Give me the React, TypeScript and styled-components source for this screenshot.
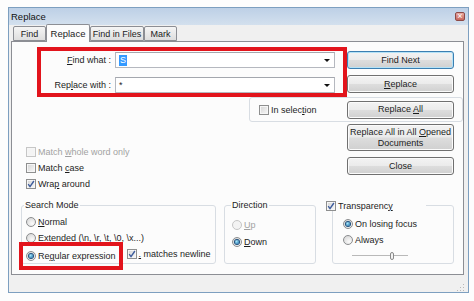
import React from "react";
import styled, { createGlobalStyle } from "styled-components";

const GlobalStyle = createGlobalStyle`
	html, body {
		margin: 0;
		padding: 0;
		background: #fdfdfd;
	}
	body {
		font-family: "Liberation Sans", Arial, sans-serif;
		font-size: 9px;
		color: #1c1c1c;
	}
`;

function Check({ checked, disabled }: { checked?: boolean; disabled?: boolean }) {
	return (
		<CheckBox $disabled={disabled}>
			{checked && (
				<svg width="8" height="8" viewBox="0 0 8 8">
					<path d="M1.2 4.2 L3 6.6 L6.9 1" stroke="#3d5c9c" strokeWidth="1.4" fill="none" />
				</svg>
			)}
		</CheckBox>
	);
}

export default function App() {
	return (
		<Page>
			<GlobalStyle />
			<Window>
				<TitleBar>
					<Title>Replace</Title>
					<CloseBox>×</CloseBox>
				</TitleBar>
				<Body>
					<TabStrip>
						<Tab $w={33}>Find</Tab>
						<Tab $w={44} $active>
							Replace
						</Tab>
						<Tab $w={54}>Find in Files</Tab>
						<Tab $w={33}>Mark</Tab>
					</TabStrip>

					<Panel>
						<TopSection>
							<RedFrame>
								<FieldRow>
									<FieldLabel>
										<Key>F</Key>ind what :
									</FieldLabel>
									<Combo>
										<Selected>S</Selected>
										<Arrow />
									</Combo>
								</FieldRow>
								<FieldRow>
									<FieldLabel>
										Rep<Key>l</Key>ace with :
									</FieldLabel>
									<Combo>
										<span>*</span>
										<Arrow />
									</Combo>
								</FieldRow>
							</RedFrame>
							<ButtonStack $top={4}>
								<Button $default>Find Next</Button>
								<Button>
									<Key>R</Key>eplace
								</Button>
							</ButtonStack>
						</TopSection>

						<SelectionGroup>
							<CheckRow>
								<Check />
								<span>
									In selec<Key>t</Key>ion
								</span>
							</CheckRow>
							<Button $push>
								Replace <Key>A</Key>ll
							</Button>
						</SelectionGroup>

						<MiddleSection>
							<CheckColumn>
								<CheckRow $disabled>
									<Check disabled />
									<span>
										Match <Key>w</Key>hole word only
									</span>
								</CheckRow>
								<CheckRow>
									<Check />
									<span>
										Match <Key>c</Key>ase
									</span>
								</CheckRow>
								<CheckRow>
									<Check checked />
									<span>
										Wra<Key>p</Key> around
									</span>
								</CheckRow>
							</CheckColumn>
							<ButtonStack $top={2} $push>
								<Button $tall>
									Replace All in All <Key>O</Key>pened
									<br />
									Documents
								</Button>
								<Button>Close</Button>
							</ButtonStack>
						</MiddleSection>

						<BottomSection>
							<Group $left={9} $w={195} $pad={4} $top={3}>
								<Legend $shift={-2}>Search Mode</Legend>
								<RadioRow>
									<Radio />
									<span>
										<Key>N</Key>ormal
									</span>
								</RadioRow>
								<RadioRow>
									<Radio />
									<span>
										E<Key>x</Key>tended (\n, \r, \t, \0, \x...)
									</span>
								</RadioRow>
								<RadioRow>
									<RedMark>
										<RadioRow>
											<Radio $on />
											<span>
												Re<Key>g</Key>ular expression
											</span>
										</RadioRow>
									</RedMark>
									<NewlineCheck>
										<Check checked />
										<span>
											<Key>.</Key> matches newline
										</span>
									</NewlineCheck>
								</RadioRow>
							</Group>

							<Group $left={8} $w={92} $pad={7} $top={5}>
								<Legend $shift={-1}>Direction</Legend>
								<RadioRow $h={17} $disabled>
									<Radio $disabled />
									<span>
										<Key>U</Key>p
									</span>
								</RadioRow>
								<RadioRow $h={17}>
									<Radio $on />
									<span>
										<Key>D</Key>own
									</span>
								</RadioRow>
							</Group>

							<Group $left={16} $w={122} $pad={10} $top={4}>
								<CheckLegend>
									<Check checked />
									<span>
										Transparenc<Key>y</Key>
									</span>
								</CheckLegend>
								<RadioRow $h={17}>
									<Radio $on />
									<span>On losing focus</span>
								</RadioRow>
								<RadioRow $h={16}>
									<Radio />
									<span>Always</span>
								</RadioRow>
								<Slider>
									<SliderThumb />
								</Slider>
							</Group>
						</BottomSection>
					</Panel>

					<Footer>
						<Grip />
					</Footer>
				</Body>
			</Window>
		</Page>
	);
}

const Page = styled.div`
	padding: 7px 0 0 8px;
	height: 301px;
	box-sizing: border-box;
`;

const Window = styled.div`
	width: 461px;
	height: 286px;
	box-sizing: border-box;
	border: 1px solid #7d9fc0;
	background: #f0f0f0;
	display: flex;
	flex-direction: column;
`;

const TitleBar = styled.div`
	height: 17px;
	flex-shrink: 0;
	display: flex;
	align-items: center;
	padding: 0 3px 0 2px;
	background: linear-gradient(#bdd0e6, #d3e0ee);
`;

const Title = styled.span`
	font-size: 9.5px;
	color: #111;
`;

const CloseBox = styled.span`
	margin-left: auto;
	width: 10px;
	height: 9px;
	box-sizing: border-box;
	border: 1px solid #8e4a46;
	border-radius: 2px;
	background: linear-gradient(#e9aaa2, #c8665c);
	color: #fff;
	font-size: 9px;
	line-height: 6px;
	text-align: center;
`;

const Body = styled.div`
	flex: 1;
	display: flex;
	flex-direction: column;
	padding: 0 4px 0 2px;
`;

const TabStrip = styled.div`
	height: 16px;
	flex-shrink: 0;
	display: flex;
	align-items: flex-end;
	padding-left: 2px;
`;

const Tab = styled.div<{ $w: number; $active?: boolean }>`
	width: ${(p) => p.$w}px;
	height: ${(p) => (p.$active ? 18 : 15)}px;
	margin-bottom: ${(p) => (p.$active ? -1 : 0)}px;
	box-sizing: border-box;
	border: 1px solid #8c8e94;
	border-bottom: ${(p) => (p.$active ? "none" : "1px solid #8c8e94")};
	border-radius: 2px 2px 0 0;
	background: ${(p) => (p.$active ? "#fcfcfc" : "linear-gradient(#f5f5f5, #dedede)")};
	display: flex;
	align-items: center;
	justify-content: center;
	position: relative;
	z-index: ${(p) => (p.$active ? 1 : 0)};
	font-size: ${(p) => (p.$active ? 9.5 : 9)}px;
`;

const Panel = styled.div`
	height: 234px;
	flex-shrink: 0;
	box-sizing: border-box;
	border: 1px solid #8c8e94;
	background: #fcfcfc;
	padding-top: 5px;
	display: flex;
	flex-direction: column;
`;

const TopSection = styled.div`
	display: flex;
	align-items: flex-start;
`;

const RedFrame = styled.div`
	margin-left: 25px;
	width: 310px;
	height: 50px;
	box-sizing: border-box;
	border: 4px solid #e2141c;
	padding-top: 1px;
	display: flex;
	flex-direction: column;
	gap: 9px;
`;

const FieldRow = styled.div`
	height: 16px;
	display: flex;
	align-items: center;
`;

const FieldLabel = styled.span`
	width: 70px;
	margin-right: 4px;
	text-align: right;
	white-space: nowrap;
`;

const Combo = styled.div`
	width: 220px;
	height: 16px;
	box-sizing: border-box;
	border: 1px solid #b5b8bf;
	border-top-color: #a4a7ae;
	background: #fff;
	display: flex;
	align-items: center;
	padding: 0 4px 0 3px;
`;

const Selected = styled.span`
	background: #3399ff;
	color: #fff;
	padding: 0 1px;
	line-height: 11px;
`;

const Arrow = styled.span`
	margin-left: auto;
	width: 0;
	height: 0;
	border-left: 3px solid transparent;
	border-right: 3px solid transparent;
	border-top: 3px solid #111;
`;

const ButtonStack = styled.div<{ $top: number; $push?: boolean }>`
	display: flex;
	flex-direction: column;
	gap: 6px;
	margin-top: ${(p) => p.$top}px;
	margin-left: ${(p) => (p.$push ? "auto" : "0")};
	margin-right: ${(p) => (p.$push ? 9 : 0)}px;
`;

const Button = styled.button<{ $default?: boolean; $tall?: boolean; $push?: boolean }>`
	width: 107px;
	height: ${(p) => (p.$tall ? 27 : 18)}px;
	box-sizing: border-box;
	margin: 0 ${(p) => (p.$push ? 8 : 0)}px 0 ${(p) => (p.$push ? "auto" : "0")};
	padding: 0;
	font: inherit;
	font-size: 9px;
	line-height: 11px;
	color: #1c1c1c;
	border: 1px solid ${(p) => (p.$default ? "#3c7fb1" : "#707070")};
	border-radius: 3px;
	background: linear-gradient(#f3f3f3, #ebebeb 48%, #dddddd 52%, #d0d0d0);
	box-shadow: inset 0 0 0 1px ${(p) => (p.$default ? "#b4e2f7" : "#fbfbfb")};
`;

const SelectionGroup = styled.div`
	margin-left: 237px;
	width: 214px;
	height: 25px;
	box-sizing: border-box;
	border: 1px solid #d8dde3;
	border-radius: 3px;
	padding-left: 9px;
	display: flex;
	align-items: center;
`;

const MiddleSection = styled.div`
	display: flex;
	align-items: flex-start;
`;

const CheckColumn = styled.div`
	margin: 22px 0 0 14px;
	display: flex;
	flex-direction: column;
`;

const CheckRow = styled.div<{ $disabled?: boolean }>`
	height: 16px;
	display: flex;
	align-items: center;
	gap: 2px;
	color: ${(p) => (p.$disabled ? "#a2a2a2" : "inherit")};
`;

const CheckBox = styled.span<{ $disabled?: boolean }>`
	width: 10px;
	height: 10px;
	flex-shrink: 0;
	box-sizing: border-box;
	border: 1px solid ${(p) => (p.$disabled ? "#c6c6c6" : "#8e8f8f")};
	background: ${(p) =>
		p.$disabled ? "#f4f4f4" : "linear-gradient(135deg, #d4d4d4, #f9f9f9)"};
	box-shadow: inset 0 0 0 1px #f6f6f6;
	display: inline-flex;
	align-items: center;
	justify-content: center;
`;

const Key = styled.span`
	text-decoration: underline;
`;

const BottomSection = styled.div`
	margin-top: 8px;
	display: flex;
	align-items: flex-start;
`;

const Group = styled.fieldset<{ $left: number; $w: number; $pad: number; $top: number }>`
	margin: 0 0 0 ${(p) => p.$left}px;
	width: ${(p) => p.$w}px;
	height: 64px;
	box-sizing: border-box;
	border: 1px solid #d8dde3;
	border-radius: 3px;
	padding: ${(p) => p.$top}px 0 0 ${(p) => p.$pad}px;
	min-width: 0;
`;

const Legend = styled.legend<{ $shift: number }>`
	margin-left: ${(p) => p.$shift}px;
	padding: 0 1px;
	line-height: 11px;
	font-size: 9px;
`;

const CheckLegend = styled.legend`
	margin-left: -17px;
	width: 100px;
	padding: 0;
	height: 11px;
	display: flex;
	align-items: center;
	gap: 2px;
	font-size: 9px;
`;

const RadioRow = styled.div<{ $h?: number; $disabled?: boolean }>`
	height: ${(p) => p.$h ?? 16}px;
	display: flex;
	align-items: center;
	gap: 2px;
	white-space: nowrap;
	color: ${(p) => (p.$disabled ? "#a2a2a2" : "inherit")};
`;

const Radio = styled.span<{ $on?: boolean; $disabled?: boolean }>`
	width: 10px;
	height: 10px;
	flex-shrink: 0;
	box-sizing: border-box;
	border-radius: 50%;
	border: 1px solid ${(p) => (p.$disabled ? "#c6c6c6" : "#8b8d8f")};
	background: ${(p) =>
		p.$disabled ? "#f3f3f3" : "radial-gradient(circle at 65% 70%, #fbfbfb, #d2d2d2)"};
	display: inline-flex;
	align-items: center;
	justify-content: center;

	&::after {
		content: "";
		display: ${(p) => (p.$on ? "block" : "none")};
		width: 4px;
		height: 4px;
		border-radius: 50%;
		background: radial-gradient(circle at 40% 40%, #a9ecff, #1f74ad 75%);
		box-shadow: 0 0 0 1px #1d4f7d;
	}
`;

const RedMark = styled.div`
	margin: -4px 0 -8px -7px;
	height: 28px;
	box-sizing: border-box;
	border: 4px solid #e2141c;
	padding: 2px 3px 0 3px;
`;

const NewlineCheck = styled.div`
	margin-left: 2px;
	display: flex;
	align-items: center;
	gap: 2px;
`;

const Slider = styled.div`
	margin: 3px 0 0 9px;
	width: 56px;
	height: 9px;
	display: flex;
	align-items: center;
	background: linear-gradient(#b9b9b9, #b9b9b9) center / 100% 1px no-repeat;
`;

const SliderThumb = styled.span`
	margin-left: 38px;
	width: 4px;
	height: 8px;
	box-sizing: border-box;
	border: 1px solid #8a8a8a;
	border-radius: 2px;
	background: #f4f4f4;
`;

const Footer = styled.div`
	flex: 1;
	display: flex;
	align-items: flex-end;
	justify-content: flex-end;
`;

const Grip = styled.span`
	width: 8px;
	height: 8px;
	margin: 0 0 1px 0;
	background-image: radial-gradient(circle, #b8b8b8 40%, transparent 45%);
	background-size: 3px 3px;
	clip-path: polygon(100% 0, 100% 100%, 0 100%);
`;
